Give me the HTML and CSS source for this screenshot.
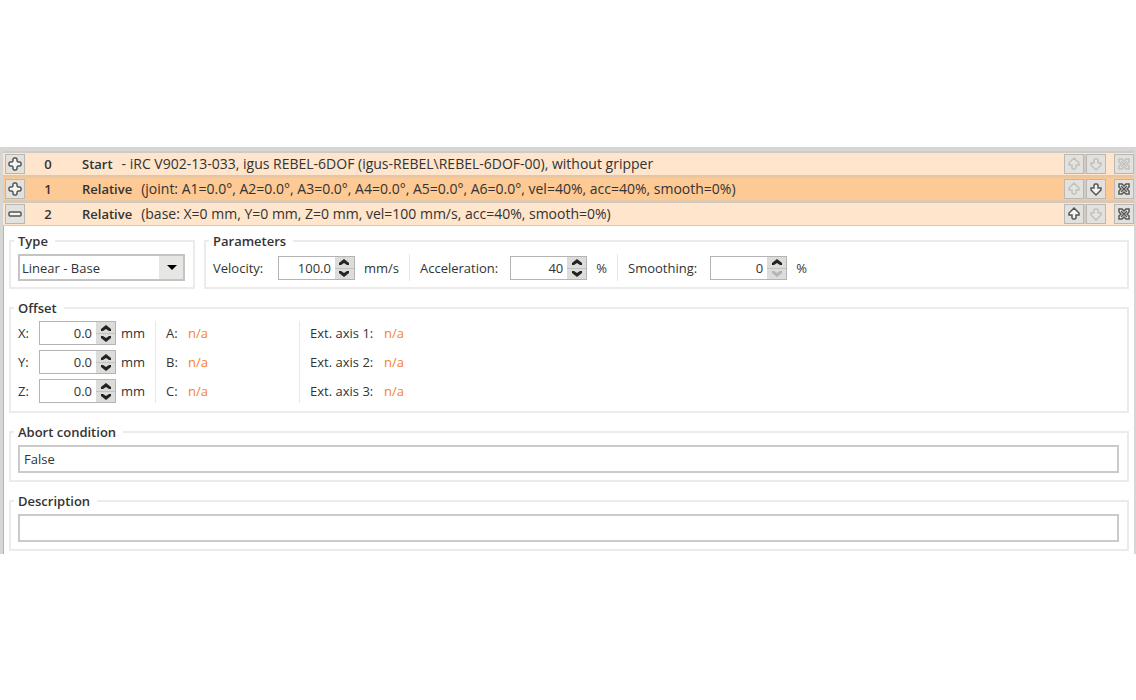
FILE: index.html
```html
<!DOCTYPE html>
<html lang="en">
<head>
    <meta charset="UTF-8">
    <title>Program editor</title>
    <link rel="stylesheet" href="styles.css">
</head>
<body>
<svg class="sprite" aria-hidden="true">
    <symbol id="plus" viewBox="0 0 16 16"><path d="M6 3l1-1h2l1 1v2l1 1h2l1 1v2l-1 1h-2l-1 1v2l-1 1H7l-1-1v-2l-1-1H3L2 9V7l1-1h2l1-1z"/></symbol>
    <symbol id="minus" viewBox="0 0 16 16"><rect x="2" y="6" width="12" height="4" rx="1"/></symbol>
    <symbol id="up" viewBox="0 0 16 16"><path d="M8 2l5 5v2h-3v3l-1 1H7l-1-1V9H3V7z"/></symbol>
    <symbol id="down" viewBox="0 0 16 16"><path d="M8 14l5-5V7h-3V4L9 3H7L6 4v3H3v2z"/></symbol>
    <symbol id="cross" viewBox="0 0 16 16"><path d="M3 3h3l2 2 2-2h3v3l-2 2 2 2v3h-3l-2-2-2 2H3v-3l2-2-2-2z"/><path d="M5 5l6 6M11 5l-6 6"/></symbol>
    <symbol id="spin-up" viewBox="0 0 12 8"><path d="M6 1l5 4v2H9L6 5 3 7H1V5z"/></symbol>
    <symbol id="spin-down" viewBox="0 0 12 8"><path d="M6 7l5-4V1H9L6 3 3 1H1v2z"/></symbol>
</svg>
<main class="editor">
    <div class="command">
        <button class="tool" aria-label="Expand"><svg><use href="#plus"/></svg></button>
        <span class="num">0</span>
        <b>Start</b>
        <span class="info">- iRC V902-13-033, igus REBEL-6DOF (igus-REBEL\REBEL-6DOF-00), without gripper</span>
        <div class="tools">
            <button class="tool" aria-label="Move up" disabled><svg><use href="#up"/></svg></button>
            <button class="tool" aria-label="Move down" disabled><svg><use href="#down"/></svg></button>
        </div>
        <button class="tool" aria-label="Delete" disabled><svg><use href="#cross"/></svg></button>
    </div>
    <div class="command active">
        <button class="tool" aria-label="Expand"><svg><use href="#plus"/></svg></button>
        <span class="num">1</span>
        <b>Relative</b>
        <span class="info">(joint: A1=0.0°, A2=0.0°, A3=0.0°, A4=0.0°, A5=0.0°, A6=0.0°, vel=40%, acc=40%, smooth=0%)</span>
        <div class="tools">
            <button class="tool" aria-label="Move up" disabled><svg><use href="#up"/></svg></button>
            <button class="tool" aria-label="Move down"><svg><use href="#down"/></svg></button>
        </div>
        <button class="tool" aria-label="Delete"><svg><use href="#cross"/></svg></button>
    </div>
    <div class="command">
        <button class="tool" aria-label="Collapse"><svg><use href="#minus"/></svg></button>
        <span class="num">2</span>
        <b>Relative</b>
        <span class="info">(base: X=0 mm, Y=0 mm, Z=0 mm, vel=100 mm/s, acc=40%, smooth=0%)</span>
        <div class="tools">
            <button class="tool" aria-label="Move up"><svg><use href="#up"/></svg></button>
            <button class="tool" aria-label="Move down" disabled><svg><use href="#down"/></svg></button>
        </div>
        <button class="tool" aria-label="Delete"><svg><use href="#cross"/></svg></button>
    </div>
    <form class="details">
        <div class="top">
            <fieldset class="type">
                <legend>Type</legend>
                <div class="combo">
                    <select aria-label="Type"><option>Linear - Base</option></select>
                    <svg viewBox="0 0 12 6"><path d="M0 0h12L6 6z"/></svg>
                </div>
            </fieldset>
            <fieldset class="params">
                <legend>Parameters</legend>
                <div class="param">
                    <label for="velocity">Velocity:</label>
                    <div class="spin">
                        <input id="velocity" type="text" value="100.0">
                        <button type="button" aria-label="Increase"><svg><use href="#spin-up"/></svg></button>
                        <button type="button" aria-label="Decrease"><svg><use href="#spin-down"/></svg></button>
                    </div>
                    <span>mm/s</span>
                </div>
                <div class="param">
                    <label for="acceleration">Acceleration:</label>
                    <div class="spin">
                        <input id="acceleration" type="text" value="40">
                        <button type="button" aria-label="Increase"><svg><use href="#spin-up"/></svg></button>
                        <button type="button" aria-label="Decrease"><svg><use href="#spin-down"/></svg></button>
                    </div>
                    <span>%</span>
                </div>
                <div class="param">
                    <label for="smoothing">Smoothing:</label>
                    <div class="spin">
                        <input id="smoothing" type="text" value="0">
                        <button type="button" aria-label="Increase"><svg><use href="#spin-up"/></svg></button>
                        <button type="button" aria-label="Decrease" disabled><svg><use href="#spin-down"/></svg></button>
                    </div>
                    <span>%</span>
                </div>
            </fieldset>
        </div>
        <fieldset class="offset">
            <legend>Offset</legend>
            <div class="axes linear">
                <label for="x">X:</label>
                <div class="spin">
                    <input id="x" type="text" value="0.0">
                    <button type="button" aria-label="Increase"><svg><use href="#spin-up"/></svg></button>
                    <button type="button" aria-label="Decrease"><svg><use href="#spin-down"/></svg></button>
                </div>
                <span>mm</span>
                <label for="y">Y:</label>
                <div class="spin">
                    <input id="y" type="text" value="0.0">
                    <button type="button" aria-label="Increase"><svg><use href="#spin-up"/></svg></button>
                    <button type="button" aria-label="Decrease"><svg><use href="#spin-down"/></svg></button>
                </div>
                <span>mm</span>
                <label for="z">Z:</label>
                <div class="spin">
                    <input id="z" type="text" value="0.0">
                    <button type="button" aria-label="Increase"><svg><use href="#spin-up"/></svg></button>
                    <button type="button" aria-label="Decrease"><svg><use href="#spin-down"/></svg></button>
                </div>
                <span>mm</span>
            </div>
            <div class="axes angles">
                <span>A:</span><span class="na">n/a</span>
                <span>B:</span><span class="na">n/a</span>
                <span>C:</span><span class="na">n/a</span>
            </div>
            <div class="axes external">
                <span>Ext. axis 1:</span><span class="na">n/a</span>
                <span>Ext. axis 2:</span><span class="na">n/a</span>
                <span>Ext. axis 3:</span><span class="na">n/a</span>
            </div>
        </fieldset>
        <fieldset>
            <legend><label for="abort">Abort condition</label></legend>
            <input class="text" id="abort" type="text" value="False">
        </fieldset>
        <fieldset>
            <legend><label for="description">Description</label></legend>
            <input class="text" id="description" type="text">
        </fieldset>
    </form>
</main>
</body>
</html>
```
FILE: styles.css
```css
*{
    box-sizing: border-box;
}
body{
    margin: 0;
    padding-top: 147px;
    background: #fff;
    color: #333;
    font: 13px/18px "Open Sans", "Noto Sans", sans-serif;
}
.sprite{
    display: none;
}
input, select, button{
    margin: 0;
    padding: 0;
    border: 0;
    border-radius: 0;
    font: inherit;
    color: inherit;
}
.editor{
    padding: 4px 2px 0 3px;
    background: #d6d6d4;
}

/* command rows */
.command{
    display: flex;
    align-items: center;
    height: 25px;
    padding-left: 2px;
    border: solid #d0cac2;
    border-width: 2px 0 1px;
    background: #fee5cc;
    white-space: nowrap;
}
.command.active{
    background: #fdc994;
    border-color: #e6c8a6;
}
.num{
    width: 46px;
    text-align: center;
    font-weight: 600;
}
.command b{
    margin-left: 11px;
    font-weight: 600;
}
.info{
    margin-left: 9px;
    font-size: 14px;
}
.tools{
    display: flex;
    gap: 2px;
    margin: 0 8px 0 auto;
    background: #d0cac2;
}
.tool{
    display: flex;
    align-items: center;
    justify-content: center;
    width: 20px;
    height: 20px;
    border: 1px solid #b9b8b4;
    background: #e2e1de;
}
.tool svg{
    width: 16px;
    height: 16px;
    fill: #f4f4f2;
    stroke: #555;
    stroke-width: 1.5;
}
.tool:disabled svg{
    fill: #e4e4e1;
    stroke: #c0c0bd;
}

/* details of the open command */
.details{
    display: flex;
    flex-direction: column;
    gap: 10px;
    padding: 6px 5px 3px;
    border-left: 1px solid #b5b5b5;
    background: #fff;
}
.top{
    display: flex;
    gap: 9px;
}
fieldset{
    min-width: 0;
    margin: 0;
    padding: 4px 8px 7px 7px;
    border: 2px solid #ebebeb;
}
legend{
    margin-left: -4px;
    padding: 0 7px 0 4px;
    font-weight: 600;
}
.type{
    width: 186px;
    padding-bottom: 6px;
}
.combo{
    position: relative;
}
.combo select{
    appearance: none;
    display: block;
    width: 100%;
    height: 27px;
    padding-left: 2px;
    border: 2px solid #c4c4c2;
    background: linear-gradient(to left, #e6e6e4 24px, #fff 24px);
}
.combo svg{
    position: absolute;
    right: 8px;
    top: 11px;
    width: 10px;
    height: 5px;
    pointer-events: none;
}
.params{
    flex: 1;
    display: grid;
    grid-template-columns: 186px 198px 190px;
    column-gap: 10px;
    padding-bottom: 6px;
}
.param{
    display: flex;
    align-items: center;
    gap: 9px;
}
.param label{
    flex: 1;
}
.param + .param{
    padding-left: 10px;
    border-left: 1px solid #e8e8e8;
}
.spin{
    display: grid;
    grid-template-columns: 1fr 19px;
    grid-template-rows: 1fr 1fr;
    width: 77px;
    height: 24px;
    border: 1px solid #b4b4b4;
}
.spin input{
    grid-row: span 2;
    min-width: 0;
    padding-right: 4px;
    text-align: right;
}
.spin button{
    display: flex;
    align-items: center;
    justify-content: center;
    min-height: 0;
    background: #dcdcda;
}
.spin button + button{
    border-top: 1px solid #c2c2c0;
}
.spin svg{
    width: 12px;
    height: 8px;
    fill: #222;
}
.spin button:disabled svg{
    fill: #b5b5b5;
}
.offset{
    display: flex;
    padding-bottom: 8px;
}
.axes{
    display: grid;
    grid-auto-rows: 24px;
    align-items: center;
    gap: 5px 0;
}
.linear{
    grid-template-columns: 21px 77px auto;
}
.linear > span{
    margin-left: 5px;
}
.angles{
    grid-template-columns: 22px 111px;
    margin-left: 10px;
    padding-left: 10px;
    border-left: 1px solid #e8e8e8;
}
.external{
    grid-template-columns: 74px auto;
    padding-left: 10px;
    border-left: 1px solid #e8e8e8;
}
.na{
    color: #f5822f;
}
.text{
    display: block;
    width: 100%;
    height: 28px;
    padding: 0 4px;
    border: 2px solid #cacac8;
}
```
